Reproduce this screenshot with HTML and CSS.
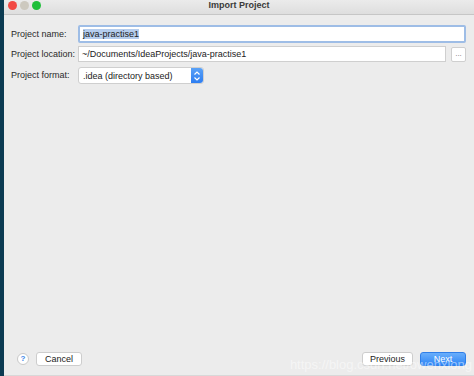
FILE: index.html
```html
<!DOCTYPE html>
<html lang="en">
<head>
    <meta charset="UTF-8">
    <title>Import Project</title>
    <link rel="stylesheet" href="styles.css">
</head>
<body>
<div class="desk">
    <div class="window">
        <div class="titlebar">
            <div class="lights">
                <span class="light red"></span>
                <span class="light grey"></span>
                <span class="light green"></span>
            </div>
            <div class="title">Import Project</div>
        </div>
        <div class="content">
            <div class="form">
                <div class="row">
                    <label class="label">Project name:</label>
                    <div class="field focus"><span class="sel">java-practise1</span></div>
                </div>
                <div class="row">
                    <label class="label">Project location:</label>
                    <div class="field">~/Documents/IdeaProjects/java-practise1</div>
                    <button class="browse">...</button>
                </div>
                <div class="row">
                    <label class="label">Project format:</label>
                    <div class="select">
                        <span>.idea (directory based)</span>
                        <span class="stepper">
                            <svg width="8" height="12" viewBox="0 0 8 12">
                                <path d="M1.5 4.5 L4 2 L6.5 4.5" fill="none" stroke="#fff" stroke-width="1.2"/>
                                <path d="M1.5 7.5 L4 10 L6.5 7.5" fill="none" stroke="#fff" stroke-width="1.2"/>
                            </svg>
                        </span>
                    </div>
                </div>
            </div>
            <div class="footer">
                <div class="left">
                    <span class="help">?</span>
                    <button class="btn">Cancel</button>
                </div>
                <div class="right">
                    <button class="btn">Previous</button>
                    <button class="btn btn-blue">Next</button>
                </div>
                <div class="mark">https://blog.csdn.net/owenxiong</div>
            </div>
        </div>
    </div>
</div>
</body>
</html>
```

FILE: styles.css
```css
html{
    height: 100%;
}
body{
    height: 100%;
    margin: 0;
    padding: 0;
    font-family: "Liberation Sans", Arial, sans-serif;
    font-size: 9px;
    color: #222;
}
.desk{
    display: flex;
    height: 100%;
    background-color: #0c3b52;
    padding-left: 4px;
    box-sizing: border-box;
}
.window{
    display: flex;
    flex-direction: column;
    flex: 1;
    background-color: #ececec;
    border-bottom: 1px solid #d8d8d8;
}
.titlebar{
    position: relative;
    height: 14px;
    background: linear-gradient(#ebebeb, #dedede);
    border-bottom: 1px solid #c6c6c6;
}
.lights{
    display: flex;
    gap: 3px;
    padding: 1px 0 0 4px;
}
.light{
    width: 9px;
    height: 9px;
    border-radius: 50%;
}
.red{
    background-color: #f24a45;
}
.grey{
    background-color: #cdc9bf;
}
.green{
    background-color: #1fbf3a;
}
.title{
    position: absolute;
    left: 0;
    right: 0;
    top: 0;
    text-align: center;
    font-weight: bold;
    font-size: 9px;
    line-height: 11px;
    color: #3a3a3a;
}
.content{
    display: flex;
    flex-direction: column;
    justify-content: space-between;
    flex: 1;
    padding: 10px 8px 9px 7px;
}
.form{
    display: flex;
    flex-direction: column;
    gap: 3px;
}
.row{
    display: flex;
    align-items: center;
    gap: 5px;
}
.label{
    flex-shrink: 0;
    width: 62px;
    white-space: nowrap;
    color: #2a2a2a;
}
.field{
    flex: 1;
    height: 14px;
    line-height: 14px;
    padding: 0 3px;
    white-space: nowrap;
    background-color: #fff;
    border: 1px solid #cfcfcf;
    color: #222;
}
.focus{
    height: 14px;
    line-height: 14px;
    border: 2px solid #9ebde6;
    border-radius: 2px;
}
.sel{
    background-color: #b5cdee;
}
.browse{
    width: 15px;
    height: 15px;
    padding: 0;
    font-size: 8px;
    line-height: 10px;
    color: #777;
    background-color: #fff;
    border: 1px solid #cfcfcf;
    border-radius: 2px;
}
.select{
    display: flex;
    justify-content: space-between;
    align-items: center;
    width: 120px;
    height: 15px;
    margin-top: 2px;
    padding-left: 4px;
    white-space: nowrap;
    background-color: #fff;
    border: 1px solid #cfcfcf;
    border-radius: 3px;
}
.stepper{
    display: flex;
    justify-content: center;
    align-items: center;
    width: 12px;
    height: 15px;
    background: linear-gradient(#5aa2f7, #2d7df1);
    border-radius: 0 3px 3px 0;
}
.footer{
    position: relative;
    display: flex;
    justify-content: space-between;
    align-items: center;
}
.left, .right{
    display: flex;
    align-items: center;
    gap: 7px;
}
.help{
    width: 12px;
    height: 12px;
    margin-left: 6px;
    border-radius: 50%;
    background-color: #fff;
    border: 1px solid #c9c9c9;
    box-sizing: border-box;
    color: #3d86e8;
    font-size: 8px;
    font-weight: bold;
    text-align: center;
    line-height: 10px;
}
.btn{
    width: 46px;
    height: 14px;
    padding: 0;
    font-family: "Liberation Sans", Arial, sans-serif;
    font-size: 9px;
    line-height: 12px;
    color: #222;
    background-color: #fff;
    border: 1px solid #cdcdcd;
    border-radius: 3px;
}
.right .btn{
    width: 51px;
}
.right .btn-blue{
    width: 46px;
}
.btn-blue{
    color: #fff;
    background: linear-gradient(#69aefb, #2f86f6);
    border-color: #2f7ee8;
}
.mark{
    position: absolute;
    right: -6px;
    bottom: -6px;
    font-size: 13px;
    color: rgba(255, 255, 255, 0.5);
    pointer-events: none;
}
```
